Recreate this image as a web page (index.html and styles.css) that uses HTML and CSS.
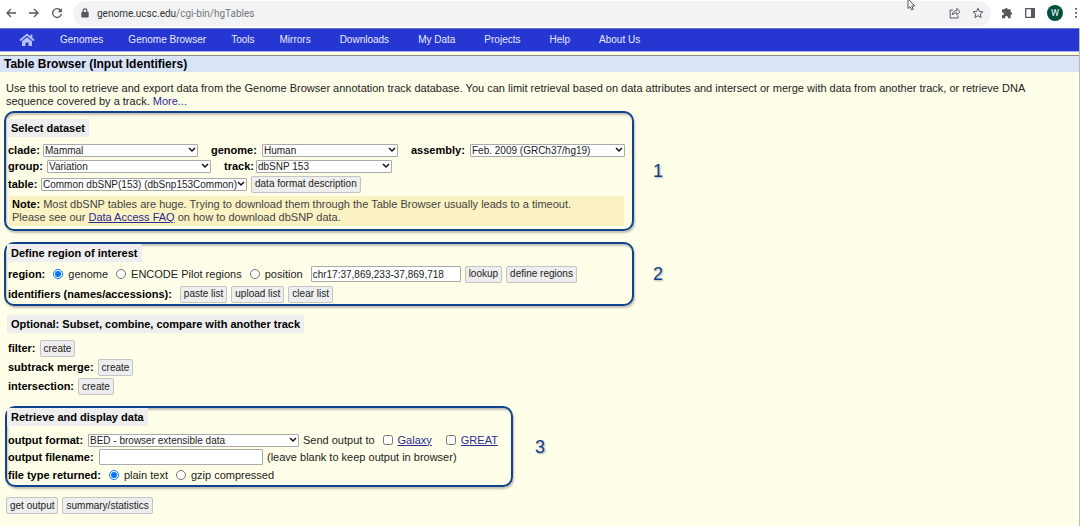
FILE: index.html
```html
<!DOCTYPE html>
<html lang="en">
<head>
<meta charset="utf-8">
<title>Table Browser</title>
<link rel="stylesheet" href="styles.css">
</head>
<body>
<header class="toolbar">
  <div class="history">
    <button class="tool" aria-label="Back"><svg width="12" height="12" viewBox="0 0 12 12"><path d="M11 6H2M6 2 2 6l4 4"/></svg></button>
    <button class="tool" aria-label="Forward"><svg width="12" height="12" viewBox="0 0 12 12"><path d="M1 6h9M6 2l4 4-4 4"/></svg></button>
    <button class="tool" aria-label="Reload"><svg width="12" height="12" viewBox="0 0 12 12"><path d="M9.6 3.4A4.4 4.4 0 1 0 10.4 7"/><path class="solid" d="M10.9 1v4.3H6.6z"/></svg></button>
  </div>
  <div class="address">
    <svg class="lock" width="8" height="10" viewBox="0 0 8 10"><path class="solid" d="M1 4h6q.7 0 .7.7v4q0 .8-.7.8H1q-.7 0-.7-.8v-4Q.3 4 1 4z"/><path d="M2.2 4.2V2.7a1.8 1.8 0 0 1 3.6 0v1.5"/></svg>
    <span class="url">genome.ucsc.edu<span class="path">/cgi-bin/hgTables</span></span>
    <svg class="pointer" width="9" height="13" viewBox="0 0 9 13"><path d="M1 0v9.5l2.200-2 1.400 3.400 1.700-.7-1.500-3.300h3z"/></svg>
    <button class="tool" aria-label="Share"><svg width="12" height="12" viewBox="0 0 12 12"><path class="thin" d="M4 3H1.200v8H9V8.500M3.300 8c.2-3 1.800-4.300 4.500-4.300V1.400L11 4.800 7.800 7.800V5.900C6 5.900 4.500 6.500 3.300 8z"/></svg></button>
    <button class="tool" aria-label="Bookmark"><svg width="12" height="12" viewBox="0 0 12 12"><path class="thin" d="m6 1.300 1.400 3.200 3.500.3-2.700 2.300.9 3.500L6 8.700l-3.100 1.900.9-3.500L1.100 4.800l3.500-.3z"/></svg></button>
  </div>
  <div class="actions">
    <button class="tool" aria-label="Extensions"><svg width="12" height="12" viewBox="0 0 12 12"><path class="solid" d="M4 2.200a1.300 1.300 0 0 1 2.600 0H9q.7 0 .7.700v2.300a1.400 1.400 0 0 1 0 2.800v2.400q0 .8-.7.800H6.900V10.500a1.400 1.400 0 0 0-2.800 0v.7H1.700q-.7 0-.7-.8V8.200h.6a1.400 1.400 0 0 0 0-2.800H1V2.900q0-.7.700-.7z"/></svg></button>
    <button class="tool" aria-label="Side panel"><svg width="12" height="12" viewBox="0 0 12 12"><path d="M1.700 1.700h8.600v8.600H1.700z"/><path class="solid" d="M7 1.500h3.500v9H7z"/></svg></button>
    <button class="avatar" aria-label="Profile">W</button>
    <button class="tool" aria-label="Menu"><svg width="4" height="12" viewBox="0 0 4 12"><path class="solid" d="M1.200 1h1.800v1.800H1.200zM1.200 5h1.800v1.800H1.200zM1.200 9h1.800v1.800H1.200z"/></svg></button>
  </div>
</header>
<main class="page">
  <nav class="menu">
    <a class="home" href="#" aria-label="Home"><svg width="16" height="14" viewBox="0 0 16 14"><path d="M1 7.500 8 1.500l7 6M12.500 1.500V5" fill="none" stroke="#b9c3fa" stroke-width="1.700"/><path d="M3 8.200 8 4.200l5 4V13H9.500V9.500h-3V13H3z" fill="#b9c3fa"/></svg></a>
    <a href="#">Genomes</a>
    <a href="#">Genome Browser</a>
    <a href="#">Tools</a>
    <div class="more">
      <a href="#">Mirrors</a>
      <a href="#">Downloads</a>
      <a href="#">My Data</a>
      <a href="#">Projects</a>
      <a href="#">Help</a>
      <a href="#">About Us</a>
    </div>
  </nav>
  <h1 class="title">Table Browser (Input Identifiers)</h1>
  <p class="intro">Use this tool to retrieve and export data from the Genome Browser annotation track database. You can limit retrieval based on data attributes and intersect or merge with data from another track, or retrieve DNA sequence covered by a track. <a href="#">More...</a></p>
  <form class="form">
    <div class="step">
      <section class="frame wide dataset">
        <h2>Select dataset</h2>
        <div class="row spaced">
          <div class="field clade"><label for="clade">clade:</label><select id="clade"><option>Mammal</option></select></div>
          <div class="field genome"><label for="genome">genome:</label><select id="genome"><option>Human</option></select></div>
          <div class="field assembly"><label for="assembly">assembly:</label><select id="assembly"><option>Feb. 2009 (GRCh37/hg19)</option></select></div>
        </div>
        <div class="row spaced">
          <div class="field group"><label for="group">group:</label><select id="group"><option>Variation</option></select></div>
          <div class="field track"><label for="track">track:</label><select id="track"><option>dbSNP 153</option></select></div>
        </div>
        <div class="row tall table-row">
          <div class="field table"><label for="table">table:</label><select id="table"><option>Common dbSNP(153) (dbSnp153Common)</option></select></div>
          <button type="button">data format description</button>
        </div>
        <p class="note"><b>Note:</b> Most dbSNP tables are huge. Trying to download them through the Table Browser usually leads to a timeout.<br>Please see our <a href="#">Data Access FAQ</a> on how to download dbSNP data.</p>
      </section>
      <span class="number">1</span>
    </div>
    <div class="step">
      <section class="frame wide region">
        <h2>Define region of interest</h2>
        <div class="row tall">
          <b class="lead">region:</b>
          <label class="choice"><input type="radio" name="region" checked>genome</label>
          <label class="choice"><input type="radio" name="region">ENCODE Pilot regions</label>
          <label class="choice"><input type="radio" name="region">position</label>
          <input class="text position" type="text" aria-label="Position" value="chr17:37,869,233-37,869,718">
          <button type="button">lookup</button>
          <button type="button">define regions</button>
        </div>
        <div class="row tall">
          <b class="lead">identifiers (names/accessions):</b>
          <button type="button">paste list</button>
          <button type="button">upload list</button>
          <button type="button">clear list</button>
        </div>
      </section>
      <span class="number">2</span>
    </div>
    <section class="optional">
      <h2>Optional: Subset, combine, compare with another track</h2>
      <div class="row"><b>filter:</b><button type="button">create</button></div>
      <div class="row"><b>subtrack merge:</b><button type="button">create</button></div>
      <div class="row"><b>intersection:</b><button type="button">create</button></div>
    </section>
    <div class="step">
      <section class="frame narrow output">
        <h2>Retrieve and display data</h2>
        <div class="row format-row">
          <div class="field format"><label for="format">output format:</label><select id="format"><option>BED - browser extensible data</option></select></div>
          <span class="send">Send output to</span>
          <span class="choice"><input type="checkbox" id="galaxy"><label for="galaxy"><a href="#">Galaxy</a></label></span>
          <span class="choice great"><input type="checkbox" id="great"><label for="great"><a href="#">GREAT</a></label></span>
        </div>
        <div class="row">
          <div class="field filename"><label for="filename">output filename:</label><input class="text" id="filename" type="text"></div>
          <span>(leave blank to keep output in browser)</span>
        </div>
        <div class="row tall">
          <b class="lead">file type returned:</b>
          <label class="choice"><input type="radio" name="type" checked>plain text</label>
          <label class="choice"><input type="radio" name="type">gzip compressed</label>
        </div>
      </section>
      <span class="number">3</span>
    </div>
    <div class="submit">
      <button type="button">get output</button>
      <button type="button">summary/statistics</button>
    </div>
  </form>
</main>
</body>
</html>
```

FILE: styles.css
```css
* { box-sizing: border-box; }

body {
  margin: 0;
  min-height: 100vh;
  display: flex;
  flex-direction: column;
  font: 11px/13px "Liberation Sans", Arial, sans-serif;
  color: #222;
}

h1, h2, p { margin: 0; }
a { color: #2b2b96; }

/* Browser toolbar */
.toolbar {
  display: flex;
  align-items: center;
  gap: 10px;
  height: 28px;
  padding: 0 2px 2px 5px;
  background: #fff;
}
.toolbar svg { display: block; fill: none; stroke: #55585c; stroke-width: 1.3; }
.toolbar .solid { fill: #55585c; stroke: none; }
.toolbar .thin { stroke-width: 1; }
.tool { height: 12px; padding: 0; border: 0; background: none; }
.history { display: flex; gap: 11px; }
.address {
  position: relative;
  flex: 1;
  display: flex;
  align-items: center;
  gap: 11px;
  height: 25px;
  padding: 0 7px 0 8px;
  border-radius: 13px;
  background: #f1f3f4;
}
.url { flex: 1; margin-left: -3px; font: 10px/13px Roboto, sans-serif; color: #333; }
.path { color: #777; }
.toolbar .pointer { position: absolute; right: 75px; top: -2px; fill: #fff; stroke: #555; stroke-width: 1; }
.actions { display: flex; align-items: center; gap: 11px; }
.avatar {
  width: 16px;
  height: 16px;
  padding: 0;
  border: 0;
  border-radius: 50%;
  background: #00503f;
  color: #fff;
  font: 9px/16px Roboto, sans-serif;
}

/* Page */
.page { flex: 1; border-right: 1px solid #bbb; background: #fffee8; }
.menu {
  display: flex;
  align-items: center;
  gap: 25px;
  height: 24px;
  padding-left: 19px;
  border-top: 1px solid #6a78c8;
  border-bottom: 1px solid #a9b2ea;
  background: #2636d1;
}
.more { display: flex; gap: 29px; }
.menu a { color: #e9ebff; font-size: 10px; line-height: 14px; text-decoration: none; }
.menu .home { display: block; height: 14px; }
.title {
  padding-left: 4px;
  border-top: 1px solid #8b8b80;
  background: #d9e4f8;
  color: #000;
  font-size: 12px;
  line-height: 16px;
}
.menu + .title { margin-top: 3px; }
.intro { padding: 10px 13px 0 6px; }
.intro a { text-decoration: none; }

/* Form */
.form { padding-top: 3px; }
.step { display: flex; align-items: center; }
.step + .step { margin-top: 11px; }
.frame {
  border: 2px solid #104389;
  border-radius: 10px;
  box-shadow: 1px 2px 2px #8888, inset 1px 2px 2px #8888;
}
.wide { width: 630px; }
.narrow { width: 508px; }
.number {
  margin-left: 19px;
  color: #104389;
  font-size: 18px;
  line-height: 20px;
  text-shadow: 1px 1px 2px #aaa;
}
.narrow + .number { margin-left: 22px; }
h2 {
  width: max-content;
  padding: 0 4px;
  background: #eee;
  color: #000;
  font-size: 11px;
  line-height: 18px;
}
.row { display: flex; align-items: center; gap: 4px; height: 16px; padding-left: 1px; }
.tall { height: 20px; }
.spaced { gap: 13px; }
.field { display: flex; align-items: center; justify-content: space-between; }
.field > label, b { color: #000; font-weight: bold; }
.clade { width: 190px; }
.clade select, .assembly select { width: 155px; }
.genome { width: 187px; }
.genome select, .track select { width: 136px; }
.assembly { width: 214px; }
.group { width: 203px; }
.group select { width: 164px; }
.track { width: 168px; }
.table { width: 239px; }
.table select { width: 206px; }
.format { width: 291px; }
.format select { width: 211px; }
.filename { width: 255px; }
.filename .text { width: 164px; }

button, select, .text { color: #222; font: 10px/12px "Liberation Sans", Arial, sans-serif; }
.form button {
  height: 17px;
  padding: 0 3px;
  border: 1px solid #c4c4c4;
  border-radius: 2px;
  background: #eee;
  white-space: nowrap;
}
select {
  appearance: none;
  height: 13px;
  padding: 0 1px;
  border: 1px solid #aaa;
  border-radius: 1px;
  background: #fff url("data:image/svg+xml,%3Csvg xmlns='http://www.w3.org/2000/svg' width='8' height='6' viewBox='0 0 8 6'%3E%3Cpath d='M1 1l3 3 3-3' fill='none' stroke='%23111' stroke-width='1.5'/%3E%3C/svg%3E") no-repeat right 1px center;
}
.text { height: 16px; padding: 0 1px; border: 1px solid #aaa; border-radius: 1px; background: #fff; }
.position { width: 150px; }
input[type="radio"], input[type="checkbox"] { width: 10px; height: 10px; margin: 0; }
.choice { display: flex; align-items: center; gap: 5px; margin-right: 4px; }
.lead { margin-right: 4px; }
.send { margin-right: 4px; }
.great { margin-left: 6px; }

.dataset { margin-left: 4px; padding: 6px 0 3px 1px; }
.dataset h2 { margin-bottom: 5px; }
.note { margin: 2px 8px 0 2px; padding: 2px 3px; background: #faf2c3; color: #444; }
.region { margin-left: 4px; padding-left: 1px; }
.region h2 { margin-bottom: 2px; }
.optional { margin: 9px 0 10px 7px; }
.optional h2 { margin-bottom: 6px; }
.optional .row { height: 19px; }
.output { margin-left: 5px; }
.output h2 { margin-bottom: 5px; }
.format-row { height: 18px; }
.submit { display: flex; gap: 4px; margin: 10px 0 0 6px; }
```
